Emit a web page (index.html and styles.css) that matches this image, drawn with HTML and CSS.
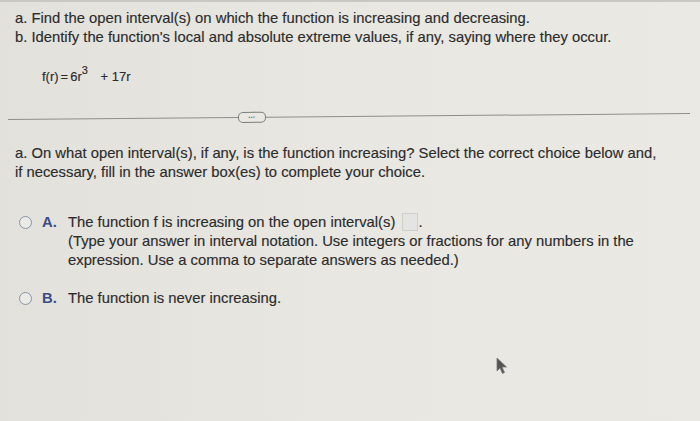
FILE: index.html
```html
<!DOCTYPE html>
<html>
<head>
<meta charset="utf-8">
<link rel="stylesheet" href="styles.css">
</head>
<body>
<div class="page">
  <div class="prompt">
    <p class="line">a. Find the open interval(s) on which the function is increasing and decreasing.</p>
    <p class="line">b. Identify the function's local and absolute extreme values, if any, saying where they occur.</p>
    <p class="formula">f(r)<span class="eq">=</span>6r<sup>3</sup> + 17r</p>
  </div>
  <div class="divider">
    <span class="rule"></span>
    <span class="pill">&bull;&bull;&bull;</span>
    <span class="rule"></span>
  </div>
  <div class="question">
    <p class="line">a. On what open interval(s), if any, is the function increasing? Select the correct choice below and,</p>
    <p class="line">if necessary, fill in the answer box(es) to complete your choice.</p>
  </div>
  <div class="choices">
    <div class="choice">
      <span class="radio"></span>
      <span class="letter">A.</span>
      <div class="ctext">
        <p class="line">The function f is increasing on the open interval(s) <span class="box"></span>.</p>
        <p class="line">(Type your answer in interval notation. Use integers or fractions for any numbers in the</p>
        <p class="line">expression. Use a comma to separate answers as needed.)</p>
      </div>
    </div>
    <div class="choice">
      <span class="radio"></span>
      <span class="letter">B.</span>
      <div class="ctext">
        <p class="line">The function is never increasing.</p>
      </div>
    </div>
  </div>
  <svg class="cursor" width="12" height="18" viewBox="0 0 12 18"><path d="M1 1 L1 14 L4 11 L6.5 16.5 L8.5 15.5 L6 10 L10.5 10 Z" fill="#555" stroke="#777" stroke-width="0.8"/></svg>
</div>
</body>
</html>
```

FILE: styles.css
```css
html, body {
  margin: 0;
  padding: 0;
}
body {
  width: 700px;
  height: 421px;
  overflow: hidden;
  background: linear-gradient(90deg, #e2e1dc 0%, #e8e7e2 50%, #eae9e4 100%);
  font-family: "Liberation Sans", Arial, sans-serif;
  color: #2c2c2c;
}
.page {
  position: relative;
  height: 421px;
  padding-top: 7px;
  box-sizing: border-box;
  border-top: 2px solid #c9c8c4;
}
p { margin: 0; }
.line {
  font-size: 14.8px;
  line-height: 19px;
  white-space: nowrap;
  -webkit-text-stroke: 0.15px #2c2c2c;
}
.prompt {
  padding-left: 15px;
}
.formula {
  font-size: 13px;
  margin-top: 21px;
  padding-left: 27px;
  line-height: 18px;
  -webkit-text-stroke: 0.15px #2c2c2c;
}
.eq { margin: 0 2px; }
.formula sup {
  font-size: 11px;
  vertical-align: 7px;
  line-height: 0;
  margin-right: 9px;
}
.divider {
  display: flex;
  align-items: center;
  margin: 28px 10px 0 8px;
  transform: rotate(-0.5deg);
  transform-origin: left center;
}
.rule {
  flex: 1;
  height: 1px;
  background: #8e8e8c;
}
.rule:first-child { flex: 0 0 230px; }
.pill {
  width: 26px;
  height: 9px;
  border: 1px solid #7d7d7d;
  border-radius: 5px;
  font-size: 5px;
  line-height: 9px;
  text-align: center;
  letter-spacing: 0.5px;
  color: #666;
  background: #e9e8e3;
}
.question {
  padding-left: 15px;
  margin-top: 19px;
}
.choices {
  margin-top: 31px;
  padding-left: 19px;
}
.choice {
  display: flex;
  align-items: flex-start;
  margin-bottom: 19px;
}
.radio {
  width: 11px;
  height: 11px;
  border: 1.5px solid #8a94a6;
  border-radius: 50%;
  margin-top: 2.5px;
  flex: none;
  background: #eceae6;
}
.letter {
  font-size: 14.8px;
  line-height: 19px;
  font-weight: bold;
  color: #3a4c86;
  width: 25px;
  margin-left: 10px;
  flex: none;
}
.ctext { padding-left: 1px; }
.box {
  display: inline-block;
  width: 14px;
  height: 16px;
  border: 1px solid #cfcfcc;
  background: #e4e4e2;
  vertical-align: -4px;
  margin-left: 3px;
}
.cursor {
  position: absolute;
  left: 496px;
  top: 355px;
}
```
